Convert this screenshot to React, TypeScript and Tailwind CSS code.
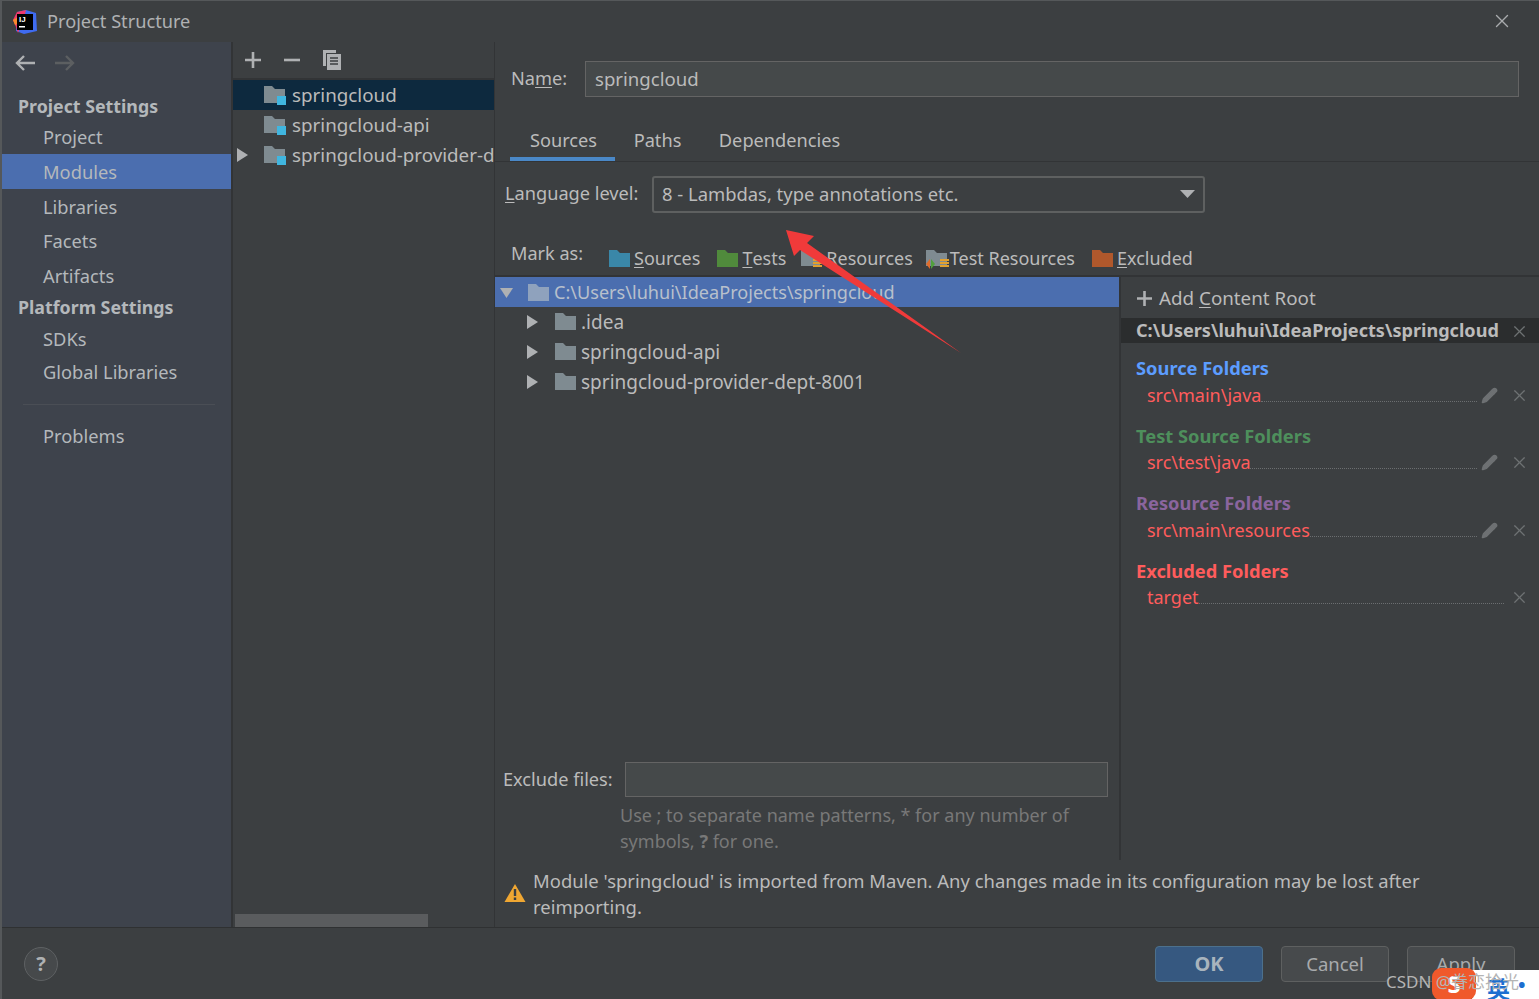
import { Pencil, X } from "lucide-react";

const font = { fontFamily: '"Noto Sans", "Noto Sans CJK SC", sans-serif' };

function Folder({ color = "#7f8b91", badge }: { color?: string; badge?: boolean }) {
  return (
    <svg width="24" height="22" viewBox="0 0 24 22" className="shrink-0">
      <path d="M1 2h8l3 3h10v14H1z" fill={color} />
      {badge && <rect x="14" y="12" width="9" height="9" fill="#40b6e0" />}
    </svg>
  );
}

function Stripes() {
  return (
    <g fill="#e0a030">
      <rect x="13" y="12" width="9" height="2" />
      <rect x="13" y="15" width="9" height="2" />
      <rect x="13" y="18" width="9" height="2" />
    </g>
  );
}

function Triangle({ down }: { down?: boolean }) {
  return (
    <svg width="14" height="14" viewBox="0 0 14 14" className="shrink-0">
      {down ? <path d="M0 2h13L6.500 12z" fill="#afb1b3" /> : <path d="M1 0l11 7-11 7z" fill="#afb1b3" />}
    </svg>
  );
}

function NavItem({ label, active, h = "h-[34.500px]" }: { label: string; active?: boolean; h?: string }) {
  return (
    <div className={`${h} flex items-center pl-[41px] text-[18.300px] text-[#b4b8bb] ${active ? "bg-[#4b6eaf]" : ""}`}>
      {label}
    </div>
  );
}

function Heading({ label }: { label: string }) {
  return <div className="h-[30px] flex items-center pl-[16px] text-[17.800px] font-bold text-[#b4b8bb]">{label}</div>;
}

function ModuleRow({ label, selected, arrow }: { label: string; selected?: boolean; arrow?: boolean }) {
  return (
    <div className={`h-[30px] flex items-center whitespace-nowrap overflow-hidden text-[18.800px] text-[#bbbbbb] ${selected ? "bg-[#0d293e]" : ""}`}>
      <div className="w-[30px] pl-[3px] shrink-0">{arrow && <Triangle />}</div>
      <Folder badge />
      <span className="ml-[5px]">{label}</span>
    </div>
  );
}

function TreeRow({ label }: { label: string }) {
  return (
    <div className="h-[30px] flex items-center pl-[31px] text-[19px] text-[#bbbbbb]">
      <Triangle />
      <span className="w-[14px]" />
      <Folder />
      <span className="ml-[3px]">{label}</span>
    </div>
  );
}

function MarkItem({ icon, first, rest }: { icon: React.ReactNode; first: string; rest: string }) {
  return (
    <div className="flex items-center text-[18px] text-[#bbbbbb]">
      {icon}
      <span className="w-[2px]" />
      <span className="underline underline-offset-2">{first}</span>
      <span>{rest}</span>
    </div>
  );
}

function Root({ path, edit = true }: { path: string; edit?: boolean }) {
  return (
    <div className="h-[27px] flex items-center pl-[26px] pr-[10px] text-[18px] text-[#ff5c5c]">
      <span>{path}</span>
      <span className="flex-1 border-b border-dotted border-[#6b6e70] mt-[12px]" />
      {edit && <Pencil size={17} fill="#6e7173" stroke="#6e7173" className="ml-[4px] shrink-0" />}
      <X size={19} strokeWidth={1.500} className={`shrink-0 text-[#6e7173] ${edit ? "ml-[12px]" : "ml-[6px]"}`} />
    </div>
  );
}

function Section({ title, color, children }: { title: string; color: string; children: React.ReactNode }) {
  return (
    <div className="h-[67.500px]">
      <div className={`h-[27px] flex items-center pl-[15px] text-[18.300px] font-bold ${color}`}>{title}</div>
      {children}
    </div>
  );
}

export default function App() {
  return (
    <div style={font} className="relative w-[1539px] h-[999px] overflow-hidden bg-[#3c3f41] flex flex-col border-l-2 border-t border-[#55585a]">
      {/* title bar */}
      <div className="h-[41px] shrink-0 flex items-center pl-[10px] pt-[1px] relative">
        <svg width="26" height="26" viewBox="0 0 26 26">
          <path d="M5 3L14 1 24 4 25 22 12 25 4 22z" fill="#3f6bf0" />
          <path d="M1 11L5 3l9-2-2 8-6 15-2-6z" fill="#f0386e" />
          <path d="M1 11l5-3 1 6-4 2z" fill="#fa8a2c" />
          <rect x="5" y="5" width="16" height="16" fill="#000" />
          <text x="7" y="13" fontSize="8" fontWeight="700" fill="#fff" fontFamily="Liberation Sans">IJ</text>
          <rect x="7" y="17" width="6" height="1.500" fill="#fff" />
        </svg>
        <span className="ml-[9px] text-[18.200px] text-[#afb1b3]">Project Structure</span>
        <X size={22} strokeWidth={1.500} className="absolute right-[26px] top-[9px] text-[#a9abad]" />
      </div>

      {/* main */}
      <div className="h-[886px] shrink-0 flex border-b border-[#2f3132]">
        {/* left nav */}
        <div className="w-[229px] shrink-0 bg-[#3e434c] flex flex-col">
          <div className="h-[49px] flex items-center pl-[12px] pb-[8px] gap-[18px]">
            <svg width="22" height="18" viewBox="0 0 22 18" fill="none" stroke="#afb1b3" strokeWidth="2.400">
              <path d="M21 9H3M10 2L3 9l7 7" />
            </svg>
            <svg width="22" height="18" viewBox="0 0 22 18" fill="none" stroke="#5c5f61" strokeWidth="2.400">
              <path d="M1 9h18M12 2l7 7-7 7" />
            </svg>
          </div>
          <Heading label="Project Settings" />
          <NavItem label="Project" h="h-[33px] pb-[2px]" />
          <NavItem label="Modules" active h="h-[35px]" />
          <NavItem label="Libraries" />
          <NavItem label="Facets" />
          <NavItem label="Artifacts" />
          <Heading label="Platform Settings" />
          <NavItem label="SDKs" h="h-[32px]" />
          <NavItem label="Global Libraries" h="h-[35px]" />
          <div className="h-[30px] flex items-center pl-[21px] pr-[16px]">
            <div className="h-px w-full bg-[#4a4e55]" />
          </div>
          <NavItem label="Problems" h="h-[33px]" />
        </div>

        {/* modules */}
        <div className="w-[264px] shrink-0 border-l-2 border-[#323436] border-r flex flex-col">
          <div className="h-[38px] shrink-0 flex items-center pl-[11px] gap-[21px] border-b-2 border-[#323436]">
            <svg width="18" height="18" viewBox="0 0 18 18" stroke="#afb1b3" strokeWidth="2.600"><path d="M9 1v16M1 9h16" /></svg>
            <svg width="18" height="18" viewBox="0 0 18 18" stroke="#afb1b3" strokeWidth="2.600"><path d="M1 9h16" /></svg>
            <svg width="20" height="22" viewBox="0 0 20 22">
              <path d="M1 1h13v3H4v13H1z" fill="#afb1b3" />
              <path d="M5 5h14v16H5z" fill="#afb1b3" />
              <path d="M8 9h8M8 12h8M8 15h8" stroke="#3c3f41" strokeWidth="1.300" />
            </svg>
          </div>
          <ModuleRow label="springcloud" selected />
          <ModuleRow label="springcloud-api" />
          <ModuleRow label="springcloud-provider-dept-8001" arrow />
          <div className="flex-1 flex items-end pl-[2px]">
            <div className="w-[193px] h-[13px] bg-[#5a5c5e]" />
          </div>
        </div>

        {/* detail */}
        <div className="flex-1 min-w-0 flex flex-col">
          <div className="h-[76px] shrink-0 flex items-center pl-[16px] pb-[2px] text-[18.200px] text-[#bbbbbb]">
            <span className="w-[74px]">Na<span className="underline underline-offset-2">m</span>e:</span>
            <div className="w-[934px] h-[36px] bg-[#45494a] border border-[#646464] flex items-center pl-[9px] text-[18.600px]">springcloud</div>
          </div>
          <div className="h-[44px] shrink-0 flex items-end pl-[15px] text-[18.200px] text-[#bbbbbb] border-b border-[#323436]">
            <div className="w-[105px] h-[44px] flex items-center justify-center pt-[8px] pl-[2px] border-b-4 border-[#4a88c7]">Sources</div>
            <div className="w-[85px] h-[44px] flex items-center justify-center pt-[4px] ml-[-1px] pl-[2px]">Paths</div>
            <div className="w-[160px] h-[44px] flex items-center justify-center pt-[4px] pl-[1px]">Dependencies</div>
          </div>
          <div className="h-[51px] shrink-0 flex items-end pl-[10px] text-[18.200px] text-[#bbbbbb]">
            <div className="w-[147px] h-[36px] flex items-center pb-[2px]"><span className="underline underline-offset-2">L</span>anguage level:</div>
            <div className="w-[553px] h-[37px] border-2 border-[#5e6060] rounded-[3px] flex items-center justify-between pl-[8px] pr-[7px] pb-[2px] text-[18.400px]">
              <span>8 - Lambdas, type annotations etc.</span>
              <svg width="16" height="9" viewBox="0 0 16 9" className="mt-[2px]"><path d="M0 0h15L7.500 8z" fill="#afb1b3" /></svg>
            </div>
          </div>
          <div className="h-[64px] shrink-0 flex items-end pb-[3px] pl-[16px] border-b-2 border-[#323436]">
            <span className="h-[36px] flex items-center w-[97px] text-[18.100px] text-[#bbbbbb]">Mark as:</span>
            <div className="flex gap-[16px] pt-[4px]">
              <MarkItem icon={<Folder color="#3a87a8" />} first="S" rest="ources" />
              <MarkItem icon={<Folder color="#508a3c" />} first="T" rest="ests" />
              <div className="ml-[-2px]">
                <MarkItem
                  icon={
                    <svg width="24" height="24" viewBox="0 0 24 24" className="shrink-0">
                      <path d="M1 3h8l3 3h8v13H1z" fill="#7f8b91" />
                      <Stripes />
                    </svg>
                  }
                  first=""
                  rest="Resources"
                />
              </div>
              <div className="flex items-center text-[18px] text-[#bbbbbb] ml-[-4px]">
                <svg width="25" height="24" viewBox="0 0 25 24" className="shrink-0">
                  <path d="M1 3h8l3 3h10v13H1z" fill="#7f8b91" />
                  <path d="M1 17l4-5v10z" fill="#e06c2c" />
                  <path d="M6 12l4 5-4 5z" fill="#50a03c" />
                  <g transform="translate(2 0)"><Stripes /></g>
                </svg>
                Test Resources
              </div>
              <MarkItem icon={<Folder color="#b0582c" />} first="E" rest="xcluded" />
            </div>
          </div>

          <div className="flex-1 min-h-0 flex">
            {/* tree */}
            <div className="w-[624px] shrink-0 flex flex-col">
              <div className="h-[30px] flex items-center pl-[5px] pt-[1px] bg-[#4b6eaf] text-[18.100px] text-[#b8c0cc]">
                <Triangle down />
                <span className="w-[13px]" />
                <Folder color="#8fa2bd" />
                <span className="ml-[3px]">C:\Users\luhui\IdeaProjects\springcloud</span>
              </div>
              <TreeRow label=".idea" />
              <TreeRow label="springcloud-api" />
              <TreeRow label="springcloud-provider-dept-8001" />
              <div className="mt-[365px] h-[35px] flex items-center pl-[8px] text-[18.200px] text-[#bbbbbb]">
                <span className="w-[122px]">Exclude files:</span>
                <div className="w-[483px] h-[35px] bg-[#45494a] border border-[#646464]" />
              </div>
              <div className="mt-[5px] pl-[125px] text-[18px] leading-[26px] text-[#787878]">
                Use ; to separate name patterns, * for any number of
                <br />
                symbols, <b>?</b> for one.
              </div>
            </div>

            {/* content roots */}
            <div className="w-[420px] shrink-0 h-[583px] border-l-2 border-[#323436] flex flex-col">
              <div className="h-[41px] flex items-center pl-[15px] pt-[1px] text-[18.800px] text-[#bbbbbb] gap-[6px]">
                <svg width="17" height="17" viewBox="0 0 17 17" stroke="#afb1b3" strokeWidth="2.600"><path d="M8.500 1v15M1 8.500h15" /></svg>
                <span>Add <span className="underline underline-offset-2">C</span>ontent Root</span>
              </div>
              <div className="h-[25px] flex items-center justify-between pl-[15px] pr-[10px] pt-[1px] bg-[#2b2d2e] text-[18.100px] font-bold text-[#bbbbbb] whitespace-nowrap">
                C:\Users\luhui\IdeaProjects\springcloud
                <X size={19} strokeWidth={1.500} className="shrink-0 text-[#6e7173]" />
              </div>
              <div className="h-[11.500px]" />
              <Section title="Source Folders" color="text-[#5c9dff]">
                <Root path="src\main\java" />
              </Section>
              <Section title="Test Source Folders" color="text-[#4e8f5c]">
                <Root path="src\test\java" />
              </Section>
              <Section title="Resource Folders" color="text-[#8a659e]">
                <Root path="src\main\resources" />
              </Section>
              <Section title="Excluded Folders" color="text-[#ff5c5c]">
                <Root path="target" edit={false} />
              </Section>
            </div>
          </div>

          <div className="h-[68px] shrink-0 flex pl-[9px] pt-[9px]">
            <svg width="22" height="20" viewBox="0 0 22 20" className="mt-[15px] shrink-0">
              <path d="M11 1l10.500 18H.5z" fill="#f0a732" />
              <path d="M9.800 6h2.400v7H9.800zM9.800 14.500h2.400V17H9.800z" fill="#3c3f41" />
            </svg>
            <p className="ml-[7px] w-[960px] text-[18.450px] leading-[26px] text-[#bbbbbb]">
              Module 'springcloud' is imported from Maven. Any changes made in its configuration may be lost after reimporting.
            </p>
          </div>
        </div>
      </div>

      {/* footer */}
      <div className="flex-1 flex items-center justify-between pl-[22px] pr-[24px]">
        <div className="w-[34px] h-[34px] rounded-full bg-[#46494b] border border-[#5e6163] flex items-center justify-center text-[20px] font-bold text-[#afb1b3]">?</div>
        <div className="flex gap-[18px] text-[18.500px]">
          <div className="w-[108px] h-[36px] rounded-[4px] bg-[#365880] border border-[#4c708c] flex items-center justify-center text-[20px] font-bold text-[#a9b4bd]">OK</div>
          <div className="w-[108px] h-[36px] rounded-[4px] bg-[#474a4c] border border-[#5e6060] flex items-center justify-center text-[#a8aaac]">Cancel</div>
          <div className="w-[108px] h-[36px] rounded-[4px] bg-[#474a4c] border border-[#5e6060] flex items-center justify-center text-[#a8aaac]">Apply</div>
        </div>
      </div>

      {/* red arrow annotation */}
      <svg className="absolute left-[-2px] top-[-1px] pointer-events-none" width="1539" height="999">
        <path d="M786 230l28 6-7 7 154 110-161-103-6 6z" fill="#f03a3a" />
      </svg>

      {/* input method badge + watermark */}
      <div className="absolute left-[1470px] top-[969px] w-[69px] h-[30px] bg-white flex items-center pl-[15px]">
        <span className="text-[23px] font-bold text-[#1d6fd0] mt-[6px]" style={{ fontFamily: '"Noto Sans CJK SC", sans-serif' }}>英</span>
        <span className="ml-[8px] text-[#1d6fd0] text-[20px] font-bold">•</span>
      </div>
      <div className="absolute left-[1430px] top-[967px] w-[44px] h-[32px] bg-[#f0592b] rounded-[9px] flex items-center justify-center text-[24px] font-bold text-white">S</div>
      <div className="absolute left-[1384px] top-[968px] text-[17px] text-[#b4b4b4] whitespace-nowrap">CSDN @眷恋拾光</div>
    </div>
  );
}
